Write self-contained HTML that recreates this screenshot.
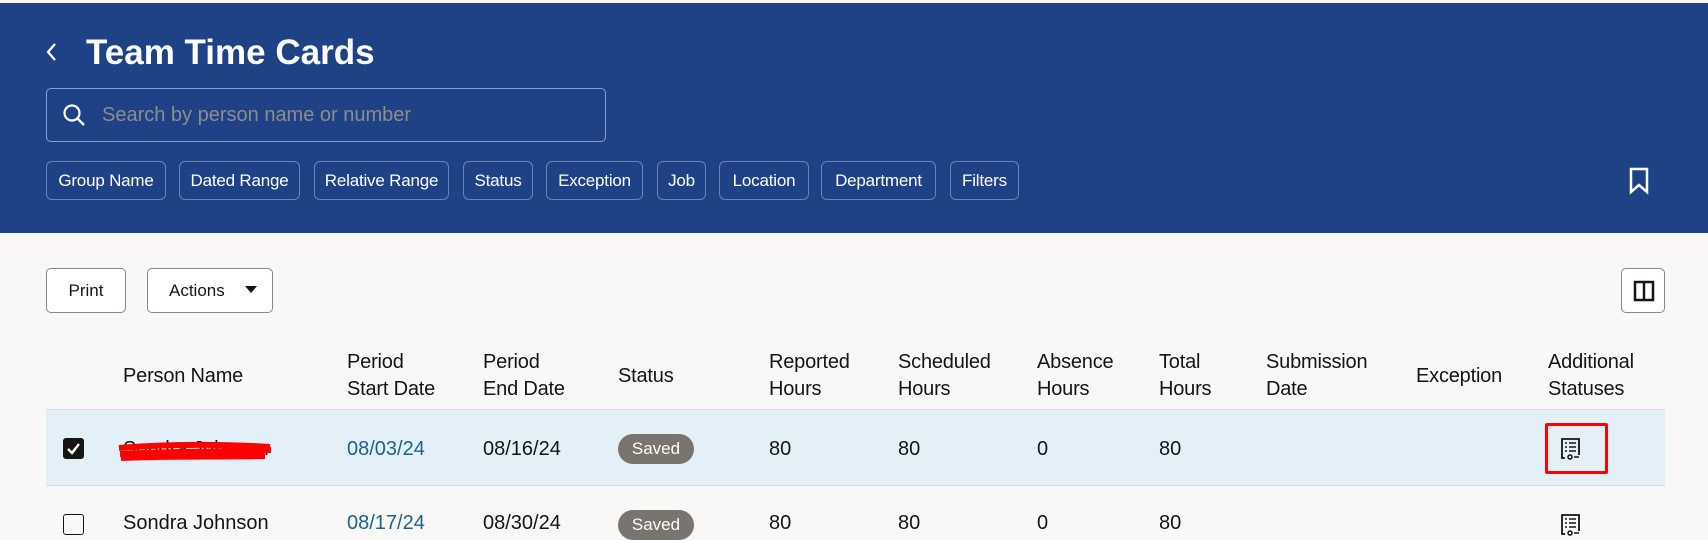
<!DOCTYPE html>
<html><head><meta charset="utf-8"><style>
*{box-sizing:border-box;margin:0;padding:0}
body{width:1708px;height:532px;overflow:hidden;background:#f9f8f6;font-family:"Liberation Sans",sans-serif;color:#161513;position:relative}
.a{position:absolute;white-space:nowrap}
#hdr{position:absolute;left:0;top:3px;width:1708px;height:230px;background:#1f4287}
.chip{position:absolute;top:161px;height:39px;border:1px solid #6a83b8;border-radius:6px;color:#fff;font-size:17px;line-height:37px;text-align:center;letter-spacing:-0.2px}
.btn{position:absolute;top:268px;height:45px;border:1px solid #8a8682;border-radius:5px;background:#fff;font-size:17px;line-height:43px;text-align:center;color:#161513}
.th{font-size:20px;line-height:27px;letter-spacing:-0.2px}
.td{font-size:20px;top:438px}
.td2{font-size:20px;top:512px}
.pill{position:absolute;width:76px;height:30px;border-radius:15px;background:#7a746e;color:#fff;font-size:17px;line-height:30px;text-align:center}
</style></head><body>
<div id="hdr"></div>
<svg class="a" style="left:44px;top:41px" width="16" height="22"><path d="M11 3L4 11l7 8" stroke="#fff" stroke-width="2.2" fill="none"/></svg>
<div class="a" style="left:86px;top:33px;font-size:35px;font-weight:bold;color:#fff">Team Time Cards</div>
<div class="a" style="left:46px;top:88px;width:560px;height:54px;border:1px solid #8ea0c8;border-radius:5px"></div>
<svg class="a" style="left:62px;top:103px" width="24" height="24"><circle cx="10" cy="10" r="7.5" stroke="#fff" stroke-width="2.2" fill="none"/><path d="M15.5 15.5L22 22" stroke="#fff" stroke-width="2.4"/></svg>
<div class="a" style="left:102px;top:104px;font-size:20px;color:#8d8d8d">Search by person name or number</div>
<div class="chip" style="left:46px;width:120px">Group Name</div>
<div class="chip" style="left:179px;width:121px">Dated Range</div>
<div class="chip" style="left:314px;width:135px">Relative Range</div>
<div class="chip" style="left:463px;width:70px">Status</div>
<div class="chip" style="left:546px;width:97px">Exception</div>
<div class="chip" style="left:657px;width:49px">Job</div>
<div class="chip" style="left:719px;width:90px">Location</div>
<div class="chip" style="left:821px;width:115px">Department</div>
<div class="chip" style="left:950px;width:69px">Filters</div>
<svg class="a" style="left:1628px;top:167px" width="22" height="28"><path d="M3 2h16v23l-8-7-8 7z" stroke="#fff" stroke-width="2.5" fill="none"/></svg>
<div class="btn" style="left:46px;width:80px">Print</div>
<div class="btn" style="left:147px;width:126px;text-align:left;padding-left:21px">Actions<span style="position:absolute;left:97px;top:17px;border-left:6px solid transparent;border-right:6px solid transparent;border-top:7px solid #161513"></span></div>
<div class="btn" style="left:1621px;width:44px"><svg style="position:absolute;left:11px;top:11px" width="22" height="22"><rect x="2" y="2" width="18" height="18" fill="none" stroke="#161513" stroke-width="2.5"/><path d="M11 2v18" stroke="#161513" stroke-width="2.5"/></svg></div>
<div class="a th" style="left:123px;top:363px">Person Name</div>
<div class="a th" style="left:347px;top:349px">Period<br>Start Date</div>
<div class="a th" style="left:483px;top:349px">Period<br>End Date</div>
<div class="a th" style="left:618px;top:363px">Status</div>
<div class="a th" style="left:769px;top:349px">Reported<br>Hours</div>
<div class="a th" style="left:898px;top:349px">Scheduled<br>Hours</div>
<div class="a th" style="left:1037px;top:349px">Absence<br>Hours</div>
<div class="a th" style="left:1159px;top:349px">Total<br>Hours</div>
<div class="a th" style="left:1266px;top:349px">Submission<br>Date</div>
<div class="a th" style="left:1416px;top:363px">Exception</div>
<div class="a th" style="left:1548px;top:349px">Additional<br>Statuses</div>
<div class="a" style="left:46px;top:409px;width:1619px;height:77px;background:#e4f0f7;border-top:1px solid #dcdcdc;border-bottom:1px solid #dcdcdc"></div>
<div class="a" style="left:63px;top:438px;width:21px;height:21px;background:#161513;border-radius:3px"><svg width="21" height="21"><path d="M5 11l4 4 7-9" stroke="#fff" stroke-width="2.5" fill="none"/></svg></div>
<div class="a td" style="left:123px">Sondra Johnson</div>
<svg class="a" style="left:115px;top:438px" width="160" height="24"><path d="M4 10C50 6 110 6 155 9M5 16C60 13 110 14 156 12M6 20C60 18 100 19 150 18" stroke="#f00" stroke-width="6" fill="none"/></svg>
<div class="a td" style="left:347px;color:#1d6389">08/03/24</div>
<div class="a td" style="left:483px">08/16/24</div>
<div class="pill" style="left:618px;top:434px">Saved</div>
<div class="a td" style="left:769px">80</div>
<div class="a td" style="left:898px">80</div>
<div class="a td" style="left:1037px">0</div>
<div class="a td" style="left:1159px">80</div>
<div class="a" style="left:1545px;top:423px;width:63px;height:51px;border:3px solid #f00;border-radius:2px"></div>
<svg class="a" style="left:1560px;top:437px" width="22" height="24"><path d="M5 21H2V2h17v16" stroke="#161513" stroke-width="1.8" fill="none"/><path d="M5 6h2M9 6h7M5 10h2M9 10h7M5 14h2M9 14h7M14 20h5" stroke="#161513" stroke-width="1.6"/><circle cx="10" cy="20" r="2" fill="none" stroke="#161513" stroke-width="1.5"/></svg>
<div class="a" style="left:63px;top:514px;width:21px;height:21px;border:1.5px solid #161513;border-radius:3px"></div>
<div class="a td2" style="left:123px">Sondra Johnson</div>
<div class="a td2" style="left:347px;color:#1d6389">08/17/24</div>
<div class="a td2" style="left:483px">08/30/24</div>
<div class="pill" style="left:618px;top:510px">Saved</div>
<div class="a td2" style="left:769px">80</div>
<div class="a td2" style="left:898px">80</div>
<div class="a td2" style="left:1037px">0</div>
<div class="a td2" style="left:1159px">80</div>
<svg class="a" style="left:1560px;top:513px" width="22" height="24"><path d="M5 21H2V2h17v16" stroke="#161513" stroke-width="1.8" fill="none"/><path d="M5 6h2M9 6h7M5 10h2M9 10h7M5 14h2M9 14h7M14 20h5" stroke="#161513" stroke-width="1.6"/><circle cx="10" cy="20" r="2" fill="none" stroke="#161513" stroke-width="1.5"/></svg>
</body></html>
